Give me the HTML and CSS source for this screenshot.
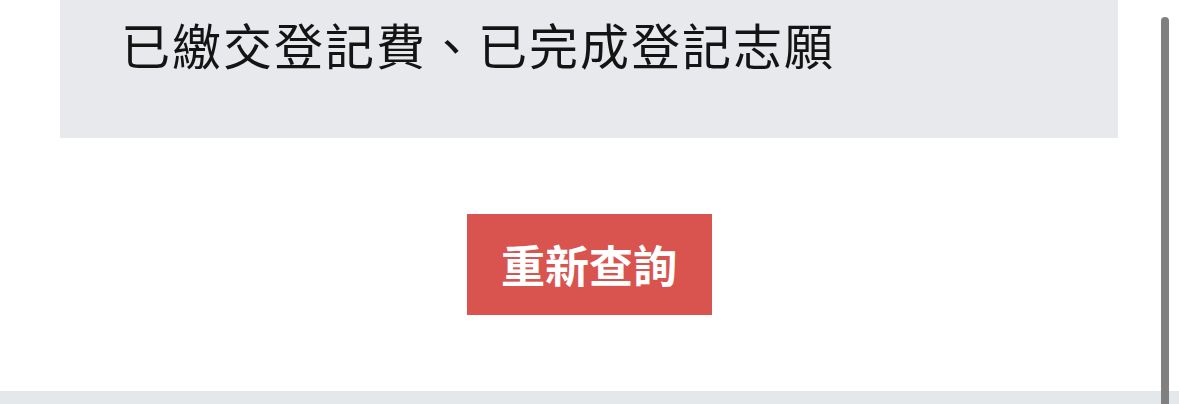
FILE: index.html
```html
<!DOCTYPE html>
<html lang="zh-Hant">
<head>
<meta charset="utf-8">
<link rel="stylesheet" href="styles.css">
</head>
<body>
<div class="page">
  <div class="status-box">
    <p class="status-text">已繳交登記費、已完成登記志願</p>
  </div>
  <div class="actions">
    <button class="btn-retry" type="button">重新查詢</button>
  </div>
  <div class="footer-strip"></div>
</div>
<div class="scrollbar"></div>
</body>
</html>
```
FILE: styles.css
```css
html, body {
  margin: 0;
  padding: 0;
  background: #ffffff;
  overflow: hidden;
}
body {
  font-family: "Noto Sans CJK TC", "Noto Sans", sans-serif;
  width: 1179px;
  height: 404px;
  position: relative;
}
.page {
  display: flex;
  flex-direction: column;
}
.status-box {
  margin-left: 60px;
  width: 1058px;
  height: 138px;
  background: #e7e9ed;
  box-sizing: border-box;
  padding: 20px 0 0 61px;
}
.status-text {
  margin: 0;
  font-size: 49px;
  line-height: 47px;
  letter-spacing: 2px;
  color: #141414;
  font-weight: 400;
}
.actions {
  margin-left: 60px;
  width: 1058px;
  display: flex;
  justify-content: center;
  padding-top: 76px;
  padding-bottom: 76px;
}
.btn-retry {
  width: 245px;
  height: 101px;
  border: none;
  border-radius: 0;
  background: #d9534f;
  color: #ffffff;
  font-family: "Noto Sans CJK TC", "Noto Sans", sans-serif;
  font-size: 44px;
  font-weight: 700;
  padding: 0 0 2px 0;
  line-height: 1;
}
.footer-strip {
  height: 13px;
  background: #e5e8eb;
}
.scrollbar {
  position: absolute;
  left: 1161px;
  top: 17px;
  width: 8px;
  height: 400px;
  background: #808080;
  border-radius: 4px 4px 0 0;
}
```
